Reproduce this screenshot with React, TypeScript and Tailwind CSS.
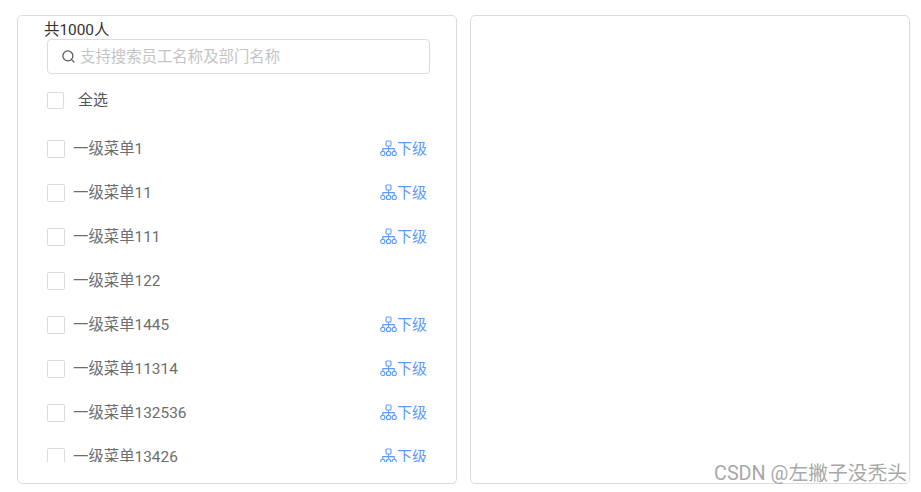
import { Search } from "lucide-react";

const FONT = "font-['Roboto','Noto_Sans_CJK_SC',sans-serif]";

const items = [
  { name: "一级菜单1", sub: true },
  { name: "一级菜单11", sub: true },
  { name: "一级菜单111", sub: true },
  { name: "一级菜单122", sub: false },
  { name: "一级菜单1445", sub: true },
  { name: "一级菜单11314", sub: true },
  { name: "一级菜单132536", sub: true },
  { name: "一级菜单13426", sub: true },
];

const OrgIcon = () => (
  <svg width="17" height="17" viewBox="0 0 17 17" fill="none" stroke="#5b9bff" strokeWidth="1.1" className="mb-[2px]">
    <rect x="6" y="1" width="5" height="5" rx="1" />
    <path d="M8.5 6V11M2.8 11V8.6H14.2V11" />
    <circle cx="2.8" cy="13.4" r="2.1" />
    <circle cx="8.5" cy="13.4" r="2.1" />
    <circle cx="14.2" cy="13.4" r="2.1" />
  </svg>
);

const Check = ({ className }: { className: string }) => (
  <span className={`block shrink-0 rounded-[2px] border border-[#dcdcdc] bg-white ${className}`} />
);

export default function App() {
  return (
    <div className={`flex h-[492px] w-[921px] gap-[13px] overflow-hidden bg-white pl-[17px] pt-[15px] ${FONT}`}>
      <div className="h-[469px] w-[440px] shrink-0 rounded-[5px] border border-[#dcdcdc] bg-white">
        <div className="pl-[26px] pt-[5px] text-[15.4px] leading-[18px] text-[#333]">共1000人</div>
        <div className="ml-[29px] flex h-[35px] w-[383px] items-center rounded-[4px] border border-[#dcdcdc] pl-[13px]">
          <Search size={15} strokeWidth={2} className="text-[#555]" />
          <span className="ml-[4px] pt-[3px] text-[15.4px] text-[#c4c4c4]">支持搜索员工名称及部门名称</span>
        </div>
        <div className="ml-[29px] mt-[17px] flex h-[18px] items-center">
          <Check className="size-[17px]" />
          <span className="ml-[14px] text-[15px] text-[#555]">全选</span>
        </div>
        <div className="mt-[18px] h-[335px] overflow-hidden pl-[29px] pr-[29px]">
          {items.map((item) => (
            <div key={item.name} className="flex h-[44px] items-center">
              <Check className="size-[18px]" />
              <span className="ml-[8px] pt-[2px] text-[15.4px] text-[#6e6e6e]">{item.name}</span>
              {item.sub && (
                <span className="ml-auto flex items-center text-[15px] text-[#5b9bff]">
                  <OrgIcon />
                  <span>下级</span>
                </span>
              )}
            </div>
          ))}
        </div>
      </div>
      <div className="h-[469px] w-[440px] shrink-0 rounded-[5px] border border-[#dcdcdc] bg-white" />
      <div className="absolute left-[714px] top-[460px] text-[19.8px] leading-[27px] text-[#a8a8a8]">CSDN @左撇子没秃头</div>
    </div>
  );
}
